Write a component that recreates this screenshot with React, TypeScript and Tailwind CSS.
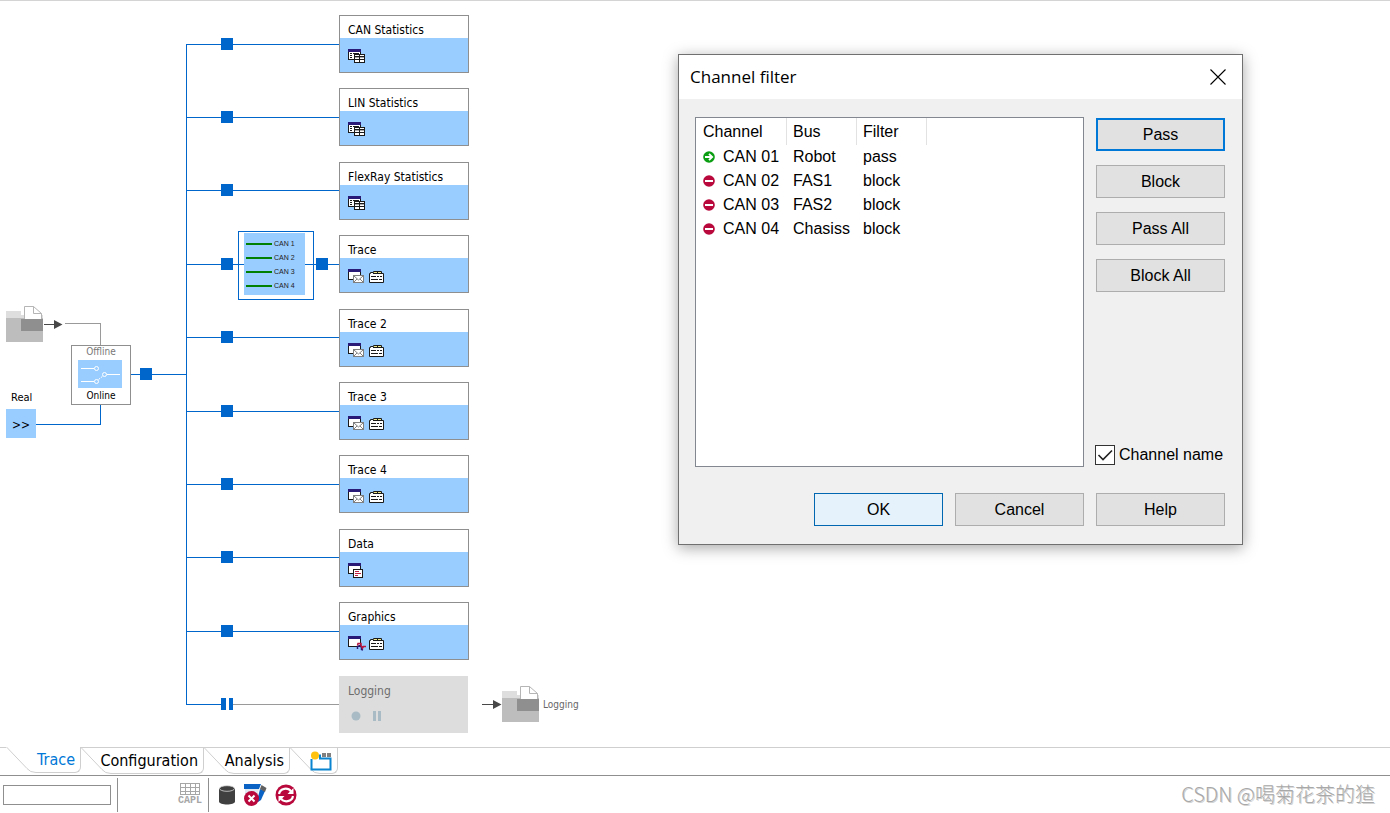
import React from 'react';

type IconName = 'stats' | 'mail' | 'data' | 'graph' | 'options';

interface MeasurementBlock {
  title: string;
  top: number;
  wire: number;
  icons: IconName[];
}

const blocks: MeasurementBlock[] = [
  { title: 'CAN Statistics', top: 15, wire: 44, icons: ['stats'] },
  { title: 'LIN Statistics', top: 88, wire: 117, icons: ['stats'] },
  { title: 'FlexRay Statistics', top: 162, wire: 190, icons: ['stats'] },
  { title: 'Trace', top: 235, wire: 264, icons: ['mail', 'options'] },
  { title: 'Trace 2', top: 309, wire: 337, icons: ['mail', 'options'] },
  { title: 'Trace 3', top: 382, wire: 411, icons: ['mail', 'options'] },
  { title: 'Trace 4', top: 455, wire: 484, icons: ['mail', 'options'] },
  { title: 'Data', top: 529, wire: 557, icons: ['data'] },
  { title: 'Graphics', top: 602, wire: 631, icons: ['graph', 'options'] },
];

const channels = [
  { name: 'CAN 01', bus: 'Robot', filter: 'pass' },
  { name: 'CAN 02', bus: 'FAS1', filter: 'block' },
  { name: 'CAN 03', bus: 'FAS2', filter: 'block' },
  { name: 'CAN 04', bus: 'Chasiss', filter: 'block' },
];

const WindowFrame: React.FC = () => (
  <>
    <rect x="0.5" y="0.5" width="12" height="10" fill="#fff" stroke="#1a1a1a" />
    <rect width="13" height="3" fill="#2a1a78" />
  </>
);

const BlockIcon: React.FC<{ name: IconName }> = ({ name }) => {
  if (name === 'options') {
    return (
      <svg width="15" height="16">
        <path d="M0.5 13.5V4.5H1.500V3.500H4.5V2.5H12.5V4.5H14.5V13.5Z" fill="#fff" stroke="#1a1a1a" />
        <path d="M5 3h3v1H5zM9 3h3v1H9z" fill="#f2e98a" />
        <path d="M4 4.5h9M8.5 2v2M2 7.5h5M8 7.5h2M11 7.5h2M2 10.5h7M10 10.5h3" stroke="#1a1a1a" fill="none" />
      </svg>
    );
  }
  return (
    <svg width="18" height="16">
      <WindowFrame />
      {name === 'stats' && (
        <>
          <path d="M2 4.5h2M2 6.5h2M2 8.5h2M5 4.5h6" stroke="#1a1a1a" />
          <rect x="6.5" y="5.5" width="10" height="8" fill="#fff" stroke="#1a1a1a" />
          <path d="M7 7.5h9M7 10.5h9M11.5 6v8" stroke="#1a1a1a" />
          <path d="M7 8.5h4M12 8.5h4" stroke="#aaa" />
        </>
      )}
      {name === 'mail' && (
        <>
          <rect x="5.5" y="6.5" width="10" height="7" fill="#fff" stroke="#808080" />
          <path d="M6 7l4.5 4L15 7M6 13l3-3M15 13l-3-3" stroke="#808080" fill="none" />
        </>
      )}
      {name === 'data' && (
        <>
          <rect x="5.5" y="6.5" width="9" height="8" fill="#fff" stroke="#1a1a1a" />
          <path d="M7 8.5h4M7 10.5h6M7 12.5h3" stroke="#c02040" />
        </>
      )}
      {name === 'graph' && (
        <g fill="none">
          <path d="M9.5 13V10.5L12 9.5L13.5 11.5V13.5L15 14" stroke="#2a1a78" strokeWidth="1.5" />
          <path d="M9.5 9.5L10 7.5H13V9.5L14.5 12L15.5 10.5H18" stroke="#b81840" strokeWidth="1.5" />
        </g>
      )}
    </svg>
  );
};

const Folder: React.FC = () => (
  <svg width="37" height="36" className="block">
    <path d="M0 5h15v4h4v4H0z" fill="#dedede" />
    <path d="M35 9h2v4h-2z" fill="#dedede" />
    <path d="M0 12h37v24H0z" fill="#bdbdbd" />
    <path d="M18.5 13V0.5H27.5L35.5 7.5V13" fill="#fff" stroke="#b5b5b5" />
    <path d="M27.5 0.5V7.5H35.5" fill="none" stroke="#b5b5b5" />
    <path d="M15 13h22v12H15z" fill="#8f8f8f" />
  </svg>
);

const Wires: React.FC = () => (
  <svg width="600" height="740" className="absolute top-0 left-0" shapeRendering="crispEdges">
    <g stroke="#0066cc" fill="none">
      <path d="M186.5 44V705M131 374.5H186M36 424.5H100.5V405M186 704.5H222" />
      {blocks.map(b => (
        <path key={b.title} d={`M186 ${b.wire}.5H339`} />
      ))}
    </g>
    <g fill="#0066cc">
      {blocks.map(b => (
        <rect key={b.title} x="221" y={b.wire - 6} width="12" height="12" />
      ))}
      <path d="M140 368h12v12h-12zM316 258h12v12h-12zM221 698h5v12h-5zM229 698h4v12h-4z" />
    </g>
    <path d="M65 323.5H100.5V345M233 704.5H339" stroke="#9a9a9a" fill="none" />
    <path d="M44 324.5H55M482 704.5H494" stroke="#484848" />
    <path d="M54 320L62.5 324.5L54 329zM493 700L501.5 704.5L493 709z" fill="#484848" shapeRendering="auto" />
  </svg>
);

const Block: React.FC<{ block: MeasurementBlock }> = ({ block }) => (
  <div
    className="absolute left-[339px] flex h-[58px] w-[130px] flex-col border border-[#8f8f8f] bg-white"
    style={{ top: block.top }}
  >
    <div className="h-[22px] pt-1 pl-2 text-xs leading-5">{block.title}</div>
    <div className="flex flex-1 gap-[3px] bg-[#99ccff] pt-[11px] pl-2">
      {block.icons.map(icon => (
        <BlockIcon key={icon} name={icon} />
      ))}
    </div>
  </div>
);

const FilterNode: React.FC = () => (
  <div className="absolute top-[231px] left-[238px] h-[69px] w-[76px] border border-[#0066cc] pt-px pl-[5px]">
    <ul className="flex h-[62px] w-[61px] flex-col bg-[#99ccff] pt-1 font-['Liberation_Sans',sans-serif] text-[7px] text-[#222]">
      {[1, 2, 3, 4].map(n => (
        <li key={n} className="flex h-3.5 items-center gap-0.5 pl-0.5">
          <span className="h-0.5 w-[26px] bg-[#008000]" />
          CAN {n}
        </li>
      ))}
    </ul>
  </div>
);

const SwitchNode: React.FC = () => (
  <div className="absolute top-[345px] left-[71px] flex h-[60px] w-[60px] flex-col border border-[#8f8f8f] bg-white px-1.5 text-center text-[10px]">
    <span className="h-3.5 leading-3 text-[#777]">Offline</span>
    <svg width="44" height="28" className="block shrink-0 bg-[#99ccff]" fill="none" stroke="#fff">
      <path d="M3 8.5H16M3 21.5H16M29 14.5H42" />
      <path d="M20.5 19.5L25 16" strokeDasharray="2 1" />
      <circle cx="18.5" cy="8.5" r="2" />
      <circle cx="18.5" cy="21.5" r="2" />
      <circle cx="26.5" cy="14.5" r="2" />
    </svg>
    <span className="h-4 leading-4">Online</span>
  </div>
);

const LoggingBlock: React.FC = () => (
  <div className="absolute top-[676px] left-[339px] h-[57px] w-[129px] bg-[#dddddd] pt-[5px] pl-[9px] text-xs leading-5 text-[#6d6d6d]">
    Logging
    <svg width="40" height="14" className="mt-2 block">
      <circle cx="8" cy="7" r="4.5" fill="#a9bcc5" />
      <path d="M25 2h3v10h-3zM30 2h3v10h-3z" fill="#a9bcc5" />
    </svg>
  </div>
);

const DialogButton: React.FC<{ label: string; className?: string }> = ({
  label,
  className = 'border border-[#adadad] bg-[#e1e1e1]',
}) => (
  <button type="button" className={`h-[33px] w-[129px] ${className}`}>
    {label}
  </button>
);

const FilterIcon: React.FC<{ pass: boolean }> = ({ pass }) => (
  <svg width="12" height="12" viewBox="0 0 12 12">
    <circle cx="6" cy="6" r="5.8" fill={pass ? '#0a9e12' : '#b8083c'} />
    {pass ? (
      <path d="M2 6H9M6 2.8L9.2 6L6 9.2" stroke="#fff" strokeWidth="1.8" fill="none" />
    ) : (
      <path d="M2 5h8v2H2z" fill="#fff" />
    )}
  </svg>
);

const ChannelFilterDialog: React.FC = () => (
  <section
    role="dialog"
    aria-labelledby="dialog-title"
    className="absolute top-[54px] left-[678px] w-[565px] border border-[#707070] bg-[#f0f0f0] font-['Liberation_Sans',sans-serif] text-base leading-6 shadow-[0_3px_14px_rgba(0,0,0,0.35)]"
  >
    <header className="flex h-11 items-center justify-between bg-white pr-4 pl-[11px]">
      <h2 id="dialog-title" className="font-['Open_Sans',sans-serif] text-[17px]">
        Channel filter
      </h2>
      <button type="button" aria-label="Close">
        <svg width="16" height="16" stroke="#000" strokeWidth="1.1">
          <path d="M0.5 0.5L15.5 15.5M15.5 0.5L0.5 15.5" />
        </svg>
      </button>
    </header>

    <div className="flex gap-3 pt-[18px] pr-[17px] pl-4">
      <div className="h-[350px] flex-1 border border-[#828790] bg-white">
        <table className="table-fixed border-separate border-spacing-0 text-left">
          <thead>
            <tr className="h-[27px]">
              <th className="w-[91px] border-r border-[#e2e2e2] pl-[7px] font-normal">Channel</th>
              <th className="w-[70px] border-r border-[#e2e2e2] pl-1.5 font-normal">Bus</th>
              <th className="w-[70px] border-r border-[#e2e2e2] pl-1.5 font-normal">Filter</th>
            </tr>
          </thead>
          <tbody>
            {channels.map(channel => (
              <tr key={channel.name} className="h-6">
                <td className="pl-[7px]">
                  <span className="flex items-center gap-2">
                    <FilterIcon pass={channel.filter === 'pass'} />
                    {channel.name}
                  </span>
                </td>
                <td className="pl-1.5">{channel.bus}</td>
                <td className="pl-1.5">{channel.filter}</td>
              </tr>
            ))}
          </tbody>
        </table>
      </div>

      <div className="flex w-[129px] flex-col justify-between">
        <div className="flex flex-col gap-3.5 pt-px">
          <DialogButton label="Pass" className="border-2 border-[#0078d7] bg-[#e1e1e1]" />
          <DialogButton label="Block" />
          <DialogButton label="Pass All" />
          <DialogButton label="Block All" />
        </div>
        <label className="flex items-center gap-1 whitespace-nowrap">
          <span className="-ml-px grid">
            <input
              type="checkbox"
              defaultChecked
              className="peer col-start-1 row-start-1 size-5 appearance-none border border-[#333] bg-white"
            />
            <svg
              width="20"
              height="20"
              className="pointer-events-none invisible col-start-1 row-start-1 peer-checked:visible"
              fill="none"
              stroke="#222"
              strokeWidth="1.6"
            >
              <path d="M3.5 10L8 14.5L17 5.5" />
            </svg>
          </span>
          Channel name
        </label>
      </div>
    </div>

    <footer className="flex justify-end gap-3 pt-[26px] pr-[17px] pb-[18px]">
      <DialogButton label="OK" className="border border-[#0067b0] bg-[#e5f1fb]" />
      <DialogButton label="Cancel" />
      <DialogButton label="Help" />
    </footer>
  </section>
);

const Tab: React.FC<{ className: string; label?: string; children: React.ReactNode }> = ({
  className,
  label,
  children,
}) => (
  <button
    type="button"
    aria-label={label}
    className={`relative flex h-[26px] items-center justify-end text-base whitespace-nowrap ${className}`}
  >
    <svg width="30" height="26" className="absolute top-0 left-0" fill="none" stroke="#cfcfcf">
      <path d="M0.5 0L21 21.5Q24 25.5 30 25.5" />
    </svg>
    <span className="absolute top-0 right-0 bottom-0 left-[30px] rounded-br-md border-r border-b border-[#cfcfcf]" />
    <span className="relative">{children}</span>
  </button>
);

const Toolbar: React.FC = () => (
  <div className="flex h-[38px] items-center border-t border-[#8f8f8f] pl-[3px]">
    <input
      type="text"
      aria-label="Command"
      className="h-5 w-[108px] border border-[#8f8f8f] bg-white px-1 text-xs"
    />
    <span className="ml-1.5 h-[34px] w-px bg-[#8f8f8f]" />
    <button type="button" className="ml-[60px] flex w-6 flex-col items-center text-[#a6a6a6]">
      <svg width="20" height="12" stroke="currentColor" fill="none" shapeRendering="crispEdges">
        <path d="M0 0.5H20M0 4.5H20M0 8.5H20M0 11.5H20M0.5 0V12M5.5 0V12M10.5 0V12M15.5 0V12M19.5 0V12" />
      </svg>
      <span className="font-['Liberation_Mono',monospace] text-[10px] leading-[11px] font-bold">CAPL</span>
    </button>
    <span className="ml-1.5 h-[34px] w-px bg-[#8f8f8f]" />
    <button type="button" aria-label="Database" className="ml-2.5">
      <svg width="16" height="20" className="block">
        <path d="M0 3.5V16.5C0 20.5 16 20.5 16 16.5V3.5z" fill="#404040" />
        <ellipse cx="8" cy="3.5" rx="7.5" ry="2.8" fill="#404040" stroke="#d8d8d8" strokeWidth="0.8" />
      </svg>
    </button>
    <button type="button" aria-label="Clear" className="ml-2">
      <svg width="24" height="24" className="block">
        <path d="M1 1h17l-2 5H1z" fill="#0a62c4" />
        <path d="M2 6h14l-2 9H2z" fill="#e0e8f2" />
        <path d="M17 6l5 2-4 9-3 2v-5z" fill="#0a62c4" />
        <path d="M18.5 2l5 3-1.5 4-5-3z" fill="#606060" />
        <circle cx="8.5" cy="15.5" r="7.5" fill="#b8083c" />
        <path d="M5.5 12.5L11.5 18.5M11.5 12.5L5.5 18.5" stroke="#fff" strokeWidth="2" />
      </svg>
    </button>
    <button type="button" aria-label="Reload" className="ml-2">
      <svg width="22" height="22" className="block">
        <circle cx="11" cy="11" r="10.5" fill="#b8083c" />
        <g fill="none" stroke="#fff" strokeWidth="2.2">
          <path d="M4 10C5 4 13 3 16 7.5" />
          <path d="M18 12C17 18 9 19 6 14.5" />
        </g>
        <path d="M18.5 4V10H12.5zM3.5 18V12H9.5z" fill="#fff" />
      </svg>
    </button>
    <span className="ml-auto pr-[15px] pb-0.5 font-['Noto_Sans_CJK_SC',sans-serif] text-xl leading-8 font-light text-[#a8a8a8] [text-shadow:1px_1px_0_#8c8c8c66]">
      CSDN @喝菊花茶的猹
    </span>
  </div>
);

const App: React.FC = () => {
  return (
    <div className="flex min-h-screen flex-col border-t border-[#d4d4d4] bg-white font-['DejaVu_Sans_Condensed','DejaVu_Sans',sans-serif] text-black">
      <main className="relative -mt-px min-h-[747px] flex-1">
        <Wires />
        {blocks.map(block => (
          <Block key={block.title} block={block} />
        ))}
        <FilterNode />
        <SwitchNode />
        <LoggingBlock />

        <div className="absolute top-[306px] left-[6px]">
          <Folder />
        </div>
        <span className="absolute top-[390px] left-[11px] text-[11px] leading-4">Real</span>
        <div className="absolute top-[409px] left-[6px] flex h-[29px] w-[30px] items-center justify-center bg-[#99ccff] pt-0.5 text-xs">
          &gt;&gt;
        </div>
        <div className="absolute top-[686px] left-[502px] flex items-center gap-1 text-[10px] text-[#666]">
          <Folder />
          Logging
        </div>

        <ChannelFilterDialog />
      </main>

      <nav className="flex h-7 items-start">
        <span className="h-px w-1.5 bg-[#cfcfcf]" />
        <Tab className="w-[75px] pr-1.5 text-[#0078d7]">Trace</Tab>
        <div className="flex flex-1 border-t border-[#cfcfcf]">
          <Tab className="w-[123px] pr-1.5">Configuration</Tab>
          <Tab className="w-[86px] pr-1.5">Analysis</Tab>
          <Tab className="w-12 pr-1.5" label="New tab">
            <svg width="22" height="20" className="block">
              <path d="M9 4.5H10V7.5H20.5V18.5H1.5V8" fill="none" stroke="#0a84d0" strokeWidth="2" />
              <path d="M12 2h4v4h-4zM17 2h4v4h-4z" fill="#808080" />
              <circle cx="5" cy="4.5" r="4" fill="#ffc20e" />
            </svg>
          </Tab>
        </div>
      </nav>
      <Toolbar />
    </div>
  );
};

export default App;
